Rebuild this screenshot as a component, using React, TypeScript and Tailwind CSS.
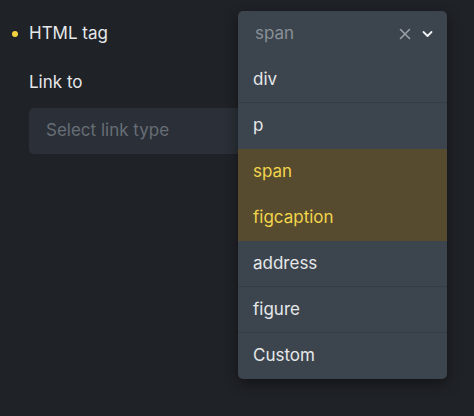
import React from "react";

const items: { label: string; active?: boolean; divider?: boolean }[] = [
  { label: "div", divider: true },
  { label: "p" },
  { label: "span", active: true },
  { label: "figcaption", active: true },
  { label: "address", divider: true },
  { label: "figure", divider: true },
  { label: "Custom" },
];

export default function App() {
  return (
    <div
      className="relative w-[474px] h-[416px] bg-[#1f2227] overflow-hidden text-[17px]"
      style={{ fontFamily: "Inter, 'Noto Sans', sans-serif" }}
    >
      <div className="flex flex-col pt-[19px]">
        <div className="flex items-center h-[30px]">
          <div className="w-[29px] flex justify-center pl-[1px]">
            <span className="w-[6px] h-[6px] rounded-full bg-[#f3d13f]" />
          </div>
          <span className="text-[#e6e8ea]">HTML tag</span>
        </div>
        <div className="h-[19px]" />
        <div className="pl-[29px] flex items-center h-[30px] text-[#e6e8ea]">Link to</div>
        <div className="ml-[29px] mt-[10px] h-[46px] w-[260px] rounded-[5px] bg-[#2b3038] flex items-center pl-[17px] text-[#676d75]">
          Select link type
        </div>
      </div>

      <div className="absolute left-[238px] top-[11px] w-[209px] rounded-[5px] bg-[#3c454e] shadow-[0_4px_14px_rgba(0,0,0,0.45)] overflow-hidden">
        <div className="h-[46px] flex items-center pl-[17px] pr-[14px] text-[#8a9097]">
          <span className="flex-1">span</span>
          <svg width="12" height="12" viewBox="0 0 12 12" className="mr-[11px]">
            <path d="M1.5 1.5 L10.5 10.5 M10.5 1.5 L1.5 10.5" stroke="#9aa0a6" strokeWidth="1.6" strokeLinecap="round" />
          </svg>
          <svg width="11" height="8" viewBox="0 0 11 8">
            <path d="M1.5 2 L5.5 6 L9.5 2" stroke="#eef0f2" strokeWidth="1.8" fill="none" strokeLinecap="round" strokeLinejoin="round" />
          </svg>
        </div>
        {items.map((it) => (
          <div
            key={it.label}
            className={
              "h-[46px] flex items-center pl-[15px] " +
              (it.active ? "bg-[#574b2f] text-[#f2d54c] " : "text-[#e6e8ea] ") +
              (it.divider ? "border-b border-[#343c44]" : "")
            }
          >
            {it.label}
          </div>
        ))}
      </div>
    </div>
  );
}
